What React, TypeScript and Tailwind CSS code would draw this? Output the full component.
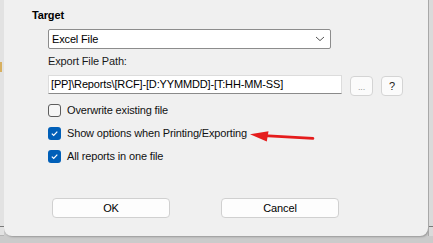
import React from 'react';

const font = "font-['Liberation_Sans',Arial,sans-serif] tracking-[-0.15px]";

const Check = ({ checked, label }: { checked: boolean; label: string }) => (
    <div className="flex items-center h-[13px] gap-[6px]">
        {checked ? (
            <span className="w-[13px] h-[13px] rounded-[3px] bg-[#005fb8] flex items-center justify-center">
                <svg width="9" height="9" viewBox="0 0 9 9">
                    <path d="M1.8 4.6 L3.7 6.4 L7.3 2.6" fill="none" stroke="#fff" strokeWidth="1.2" />
                </svg>
            </span>
        ) : (
            <span className="w-[13px] h-[13px] rounded-[3px] border border-[#5d5d5d] bg-[#f6f6f6]" />
        )}
        <span className="text-[11px] leading-[13px] text-[#111]">{label}</span>
    </div>
);

export default function App() {
    return (
        <div className={`relative w-[433px] h-[243px] bg-[#cbcbcb] flex overflow-hidden ${font}`}>
            {/* window behind, left edge */}
            <div className="relative w-[4px] h-[236px] bg-[#e2e2e2] border-b border-[#b5b5b5]">
                <div className="absolute left-0 top-[62px] w-[2px] h-[10px] bg-[#d8b060]" />
                <div className="absolute left-0 top-[226px] w-[4px] h-px bg-[#7a7a7a]" />
            </div>

            {/* dialog */}
            <div className="w-[424px] h-[236px] bg-[#f0f0f0] rounded-b-[8px] pl-[28px] pt-[9px] flex flex-col shadow-[1px_1px_2px_rgba(0,0,0,0.25)]">
                <div className="text-[11px] leading-[13px] font-bold text-black">Target</div>

                <div className="ml-[16px] flex flex-col">
                    <div className="mt-[7px] w-[283px] h-[20px] bg-white border border-[#8c8c8c] rounded-[2px] flex items-center justify-between pl-[3px] pr-[5px]">
                        <span className="text-[11px] leading-[13px] text-black">Excel File</span>
                        <svg width="10" height="6" viewBox="0 0 10 6">
                            <path d="M1 1 L5 4.6 L9 1" fill="none" stroke="#555" strokeWidth="1" />
                        </svg>
                    </div>

                    <div className="mt-[6px] text-[11px] leading-[13px] text-[#1a1a1a]">Export File Path:</div>

                    <div className="mt-[7px] flex items-start gap-[8px]">
                        <div className="w-[294px] h-[19px] bg-white border border-[#dcdcdc] border-b-[#8a8a8a] flex items-center pl-[2px]">
                            <span className="text-[11px] leading-[13px] text-black whitespace-nowrap">[PP]\Reports\[RCF]-[D:YYMMDD]-[T:HH-MM-SS]</span>
                        </div>
                        <div className="mt-[1px] w-[23px] h-[20px] bg-[#fbfbfb] border border-[#d4d4d4] rounded-[4px] flex items-center justify-center text-[9px] leading-none text-[#9a9a9a] pt-[3px]">...</div>
                        <div className="mt-[1px] w-[22px] h-[20px] bg-[#fbfbfb] border border-[#d4d4d4] rounded-[4px] flex items-center justify-center text-[11px] leading-none text-[#1a1a1a]">?</div>
                    </div>

                    <div className="mt-[8px] flex flex-col gap-[10px]">
                        <Check checked={false} label="Overwrite existing file" />
                        <Check checked={true} label="Show options when Printing/Exporting" />
                        <Check checked={true} label="All reports in one file" />
                    </div>
                </div>

                <div className="mt-[35px] ml-[20px] flex gap-[51px]">
                    <div className="w-[118px] h-[20px] bg-[#fdfdfd] border border-[#d0d0d0] rounded-[4px] flex items-center justify-center text-[11px] leading-[13px] text-black">OK</div>
                    <div className="w-[118px] h-[20px] bg-[#fdfdfd] border border-[#d0d0d0] rounded-[4px] flex items-center justify-center text-[11px] leading-[13px] text-black">Cancel</div>
                </div>
            </div>

            {/* window behind, right edge */}
            <div className="relative flex-1 h-[236px] bg-[#dadada] border-l border-[#a8a8a8]">
                <div className="absolute left-0 top-[226px] w-full h-px bg-[#7a7a7a]" />
            </div>

            {/* red annotation arrow */}
            <svg className="absolute left-[248px] top-[128px]" width="70" height="16" viewBox="248 128 70 16">
                <path d="M313 138.4 L264 135.6" stroke="#e51c1c" strokeWidth="2.6" strokeLinecap="round" />
                <polygon points="250,134.2 268.5,131.2 266.8,141.6" fill="#e51c1c" />
            </svg>
        </div>
    );
}
